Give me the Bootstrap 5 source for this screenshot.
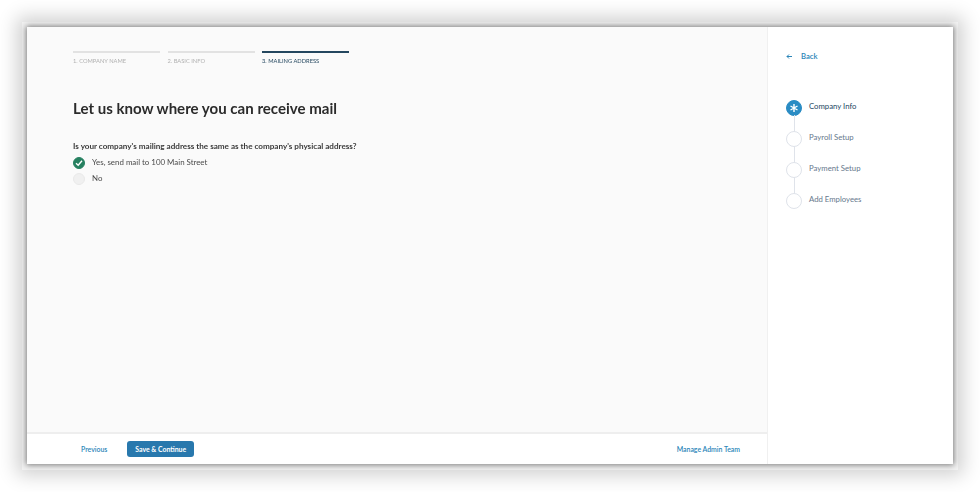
<!doctype html>
<html lang="en"><head><meta charset="utf-8">
<link href="https://cdn.jsdelivr.net/npm/bootstrap@5.3.0/dist/css/bootstrap.min.css" rel="stylesheet">
<style>
html,body{height:100%;background:#fff;overflow:hidden}
body{font-family:"Lato","Noto Sans",sans-serif;color:#333}
.shell{margin:22px 22px 0;height:448px;width:936px;padding:5px;background:#f2f2f2;box-shadow:0 0 18px 5px #cfcfcf;overflow:hidden}
.frame{height:437px;background:#fff;box-shadow:0 0 6px 1px #7a7a7a}
.mainp{width:741px;background:#fafafa;border-right:1px solid #f0f0f0}
.content{padding:24px 46px 0;filter:blur(.25px)}
.stepc{width:87px;margin-right:7.5px;font-size:5.75px;color:#b0b0b0;padding-top:4px;border-top:2px solid #e2e2e2;line-height:8px;text-transform:uppercase}
.stepc.on{border-top-color:#24475f;color:#24475f}
h1.ttl{font-size:15.05px;font-weight:700;color:#2b2b2b;margin:33px 0 0;line-height:20px}
.qq{font-size:8.12px;font-weight:700;margin-top:23px;line-height:10px;color:#3a3a3a}
.opt{font-size:7.9px;height:16px;gap:7px;color:#4a4a4a}
.dot{width:12px;height:12px;border-radius:50%;background:#f0f0f0;border:1px solid #e8e8e8;flex:none}
.dot.yes{background:#268060;border-color:#268060}
.foot{height:32px;background:#fff;border-top:2px solid #eee;padding:0 27px 0 54px;font-size:6.9px}
.lnk{color:#2a85b8;text-decoration:none;font-weight:600}
.btn.savebtn{background:#2878ad;color:#fff;font-size:6.9px;font-weight:700;border:0;padding:0;width:67px;height:16px;line-height:16px;border-radius:3px;margin-left:20px}
.side{flex:1;padding:24px 18px 0}
.backl{font-size:7.7px;line-height:10px}
.stp{list-style:none;padding:0;margin:39px 0 0}
.stp li{display:flex;gap:7px;height:31px;font-size:7.75px;color:#66788c;line-height:10px;position:relative}
.stp li:not(:last-child)::after{content:"";position:absolute;left:7.5px;top:15px;bottom:-1px;width:1px;background:#dfe3ea}
.circ{width:16px;height:16px;border-radius:50%;border:1px solid #dfe3ea;background:#fff;flex:none;display:flex;align-items:center;justify-content:center}
.circ.on{background:#2a8cc4;border-color:#2a8cc4}
.stp li.cur{color:#24475f}
.stp span.t{margin-top:1px}
</style></head><body>
<div class="shell"><div class="frame d-flex">
<div class="mainp d-flex flex-column">
 <div class="content flex-grow-1">
  <div class="d-flex">
   <div class="stepc">1. Company Name</div><div class="stepc">2. Basic Info</div><div class="stepc on">3. Mailing Address</div>
  </div>
  <h1 class="ttl">Let us know where you can receive mail</h1>
  <div class="qq">Is your company's mailing address the same as the company's physical address?</div>
  <div class="mt-1">
  <div class="opt d-flex align-items-center"><span class="dot yes d-flex align-items-center justify-content-center"><svg width="8" height="8" viewBox="0 0 8 8"><path d="M1 4.2 3.2 6.2 7 1.8" fill="none" stroke="#fff" stroke-width="1.4"/></svg></span>Yes, send mail to 100 Main Street</div>
  <div class="opt d-flex align-items-center"><span class="dot"></span>No</div>
  </div>
 </div>
 <div class="foot d-flex align-items-center">
  <a class="lnk" href="#">Previous</a><button class="btn savebtn">Save &amp; Continue</button>
  <a class="lnk ms-auto" href="#">Manage Admin Team</a>
 </div>
</div>
<div class="side">
 <a class="lnk backl d-flex align-items-center" href="#"><svg width="7" height="7" viewBox="0 0 7 7"><path d="M6 3.5H1M3 1.500 1 3.500 3 5.500" fill="none" stroke="#2a85b8"/></svg><span class="ms-2">Back</span></a>
 <ul class="stp">
  <li class="cur"><span class="circ on"><svg width="10" height="10" viewBox="0 0 10 10"><path d="M5 1v8M1.500 3 8.500 7M8.500 3 1.500 7" stroke="#fff" stroke-width="1.400"/></svg></span><span class="t">Company Info</span></li>
  <li><span class="circ"></span><span class="t">Payroll Setup</span></li>
  <li><span class="circ"></span><span class="t">Payment Setup</span></li>
  <li><span class="circ"></span><span class="t">Add Employees</span></li>
 </ul>
</div>
</div></div>
<script src="https://cdn.jsdelivr.net/npm/bootstrap@5.3.0/dist/js/bootstrap.bundle.min.js"></script>
</body></html>
